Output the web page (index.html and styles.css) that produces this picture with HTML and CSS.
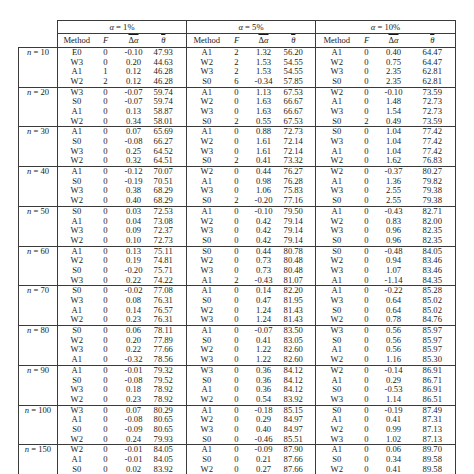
FILE: index.html
```html
<!DOCTYPE html>
<html>
<head>
<meta charset="utf-8">
<link rel="stylesheet" href="styles.css">
</head>
<body>
<table class="results">
<colgroup>
<col class="w-lab">
<col class="w-m1"><col class="w-f1"><col class="w-d1"><col class="w-t1">
<col class="w-m2"><col class="w-f2"><col class="w-d2"><col class="w-t2">
<col class="w-m3"><col class="w-f3"><col class="w-d3"><col class="w-t3">
</colgroup>
<thead>
<tr class="grp-row">
<th class="corner"></th>
<th class="grp" colspan="4"><i>α</i> = 1%</th>
<th class="grp" colspan="4"><i>α</i> = 5%</th>
<th class="grp" colspan="4"><i>α</i> = 10%</th>
</tr>
<tr class="sub-row">
<th class="corner"></th>
<th class="m">Method</th><th><i>F</i></th><th><span class="ov">Δ<i>α</i></span></th><th class="t1"><i class="ov">θ</i></th>
<th class="m">Method</th><th><i>F</i></th><th><span class="ov">Δ<i>α</i></span></th><th class="t2"><i class="ov">θ</i></th>
<th class="m">Method</th><th><i>F</i></th><th><span class="ov">Δ<i>α</i></span></th><th class="t3"><i class="ov">θ</i></th>
</tr>
</thead>
<tbody>
<tr><th class="lab" rowspan="4"><i>n</i> = 10</th><td>E0</td><td>0</td><td>-0.10</td><td>47.93</td><td>A1</td><td>2</td><td>1.32</td><td>56.20</td><td>A1</td><td>0</td><td>0.40</td><td>64.47</td></tr>
<tr><td>W3</td><td>0</td><td>0.20</td><td>44.63</td><td>W2</td><td>2</td><td>1.53</td><td>54.55</td><td>W2</td><td>0</td><td>0.75</td><td>64.47</td></tr>
<tr><td>A1</td><td>1</td><td>0.12</td><td>46.28</td><td>W3</td><td>2</td><td>1.53</td><td>54.55</td><td>W3</td><td>0</td><td>2.35</td><td>62.81</td></tr>
<tr><td>W2</td><td>2</td><td>0.12</td><td>46.28</td><td>S0</td><td>6</td><td>-0.34</td><td>57.85</td><td>S0</td><td>0</td><td>2.35</td><td>62.81</td></tr>
</tbody>
<tbody>
<tr><th class="lab" rowspan="4"><i>n</i> = 20</th><td>W3</td><td>0</td><td>-0.07</td><td>59.74</td><td>A1</td><td>0</td><td>1.13</td><td>67.53</td><td>W2</td><td>0</td><td>-0.10</td><td>73.59</td></tr>
<tr><td>S0</td><td>0</td><td>-0.07</td><td>59.74</td><td>W2</td><td>0</td><td>1.63</td><td>66.67</td><td>A1</td><td>0</td><td>1.48</td><td>72.73</td></tr>
<tr><td>A1</td><td>0</td><td>0.13</td><td>58.87</td><td>W3</td><td>0</td><td>1.63</td><td>66.67</td><td>W3</td><td>0</td><td>1.54</td><td>72.73</td></tr>
<tr><td>W2</td><td>0</td><td>0.34</td><td>58.01</td><td>S0</td><td>2</td><td>0.55</td><td>67.53</td><td>S0</td><td>2</td><td>0.49</td><td>73.59</td></tr>
</tbody>
<tbody>
<tr><th class="lab" rowspan="4"><i>n</i> = 30</th><td>A1</td><td>0</td><td>0.07</td><td>65.69</td><td>A1</td><td>0</td><td>0.88</td><td>72.73</td><td>S0</td><td>0</td><td>1.04</td><td>77.42</td></tr>
<tr><td>S0</td><td>0</td><td>-0.08</td><td>66.27</td><td>W2</td><td>0</td><td>1.61</td><td>72.14</td><td>W3</td><td>0</td><td>1.04</td><td>77.42</td></tr>
<tr><td>W3</td><td>0</td><td>0.25</td><td>64.52</td><td>W3</td><td>0</td><td>1.61</td><td>72.14</td><td>A1</td><td>0</td><td>1.04</td><td>77.42</td></tr>
<tr><td>W2</td><td>0</td><td>0.32</td><td>64.51</td><td>S0</td><td>2</td><td>0.41</td><td>73.32</td><td>W2</td><td>0</td><td>1.62</td><td>76.83</td></tr>
</tbody>
<tbody>
<tr><th class="lab" rowspan="4"><i>n</i> = 40</th><td>A1</td><td>0</td><td>-0.12</td><td>70.07</td><td>W2</td><td>0</td><td>0.44</td><td>76.27</td><td>W2</td><td>0</td><td>-0.37</td><td>80.27</td></tr>
<tr><td>S0</td><td>0</td><td>-0.19</td><td>70.51</td><td>A1</td><td>0</td><td>0.98</td><td>76.28</td><td>A1</td><td>0</td><td>1.36</td><td>79.82</td></tr>
<tr><td>W3</td><td>0</td><td>0.38</td><td>68.29</td><td>W3</td><td>0</td><td>1.06</td><td>75.83</td><td>W3</td><td>0</td><td>2.55</td><td>79.38</td></tr>
<tr><td>W2</td><td>0</td><td>0.40</td><td>68.29</td><td>S0</td><td>2</td><td>-0.20</td><td>77.16</td><td>S0</td><td>0</td><td>2.55</td><td>79.38</td></tr>
</tbody>
<tbody>
<tr><th class="lab" rowspan="4"><i>n</i> = 50</th><td>S0</td><td>0</td><td>0.03</td><td>72.53</td><td>A1</td><td>0</td><td>-0.10</td><td>79.50</td><td>A1</td><td>0</td><td>-0.43</td><td>82.71</td></tr>
<tr><td>A1</td><td>0</td><td>0.04</td><td>73.08</td><td>W2</td><td>0</td><td>0.42</td><td>79.14</td><td>W2</td><td>0</td><td>0.83</td><td>82.00</td></tr>
<tr><td>W3</td><td>0</td><td>0.09</td><td>72.37</td><td>W3</td><td>0</td><td>0.42</td><td>79.14</td><td>W3</td><td>0</td><td>0.96</td><td>82.35</td></tr>
<tr><td>W2</td><td>0</td><td>0.10</td><td>72.73</td><td>S0</td><td>0</td><td>0.42</td><td>79.14</td><td>S0</td><td>0</td><td>0.96</td><td>82.35</td></tr>
</tbody>
<tbody>
<tr><th class="lab" rowspan="4"><i>n</i> = 60</th><td>A1</td><td>0</td><td>0.13</td><td>75.11</td><td>S0</td><td>0</td><td>0.44</td><td>80.78</td><td>S0</td><td>0</td><td>-0.48</td><td>84.05</td></tr>
<tr><td>W2</td><td>0</td><td>0.19</td><td>74.81</td><td>W2</td><td>0</td><td>0.73</td><td>80.48</td><td>W2</td><td>0</td><td>0.94</td><td>83.46</td></tr>
<tr><td>S0</td><td>0</td><td>-0.20</td><td>75.71</td><td>W3</td><td>0</td><td>0.73</td><td>80.48</td><td>W3</td><td>0</td><td>1.07</td><td>83.46</td></tr>
<tr><td>W3</td><td>0</td><td>0.22</td><td>74.22</td><td>A1</td><td>2</td><td>-0.43</td><td>81.07</td><td>A1</td><td>0</td><td>-1.14</td><td>84.35</td></tr>
</tbody>
<tbody>
<tr><th class="lab" rowspan="4"><i>n</i> = 70</th><td>S0</td><td>0</td><td>-0.02</td><td>77.08</td><td>A1</td><td>0</td><td>0.14</td><td>82.20</td><td>A1</td><td>0</td><td>-0.22</td><td>85.28</td></tr>
<tr><td>W3</td><td>0</td><td>0.08</td><td>76.31</td><td>S0</td><td>0</td><td>0.47</td><td>81.95</td><td>W3</td><td>0</td><td>0.64</td><td>85.02</td></tr>
<tr><td>A1</td><td>0</td><td>0.14</td><td>76.57</td><td>W2</td><td>0</td><td>1.24</td><td>81.43</td><td>S0</td><td>0</td><td>0.64</td><td>85.02</td></tr>
<tr><td>W2</td><td>0</td><td>0.23</td><td>76.31</td><td>W3</td><td>0</td><td>1.24</td><td>81.43</td><td>W2</td><td>0</td><td>0.78</td><td>84.76</td></tr>
</tbody>
<tbody>
<tr><th class="lab" rowspan="4"><i>n</i> = 80</th><td>S0</td><td>0</td><td>0.06</td><td>78.11</td><td>A1</td><td>0</td><td>-0.07</td><td>83.50</td><td>W3</td><td>0</td><td>0.56</td><td>85.97</td></tr>
<tr><td>W2</td><td>0</td><td>0.20</td><td>77.89</td><td>S0</td><td>0</td><td>0.41</td><td>83.05</td><td>S0</td><td>0</td><td>0.56</td><td>85.97</td></tr>
<tr><td>W3</td><td>0</td><td>0.22</td><td>77.66</td><td>W2</td><td>0</td><td>1.22</td><td>82.60</td><td>A1</td><td>0</td><td>0.56</td><td>85.97</td></tr>
<tr><td>A1</td><td>0</td><td>-0.32</td><td>78.56</td><td>W3</td><td>0</td><td>1.22</td><td>82.60</td><td>W2</td><td>0</td><td>1.16</td><td>85.30</td></tr>
</tbody>
<tbody>
<tr><th class="lab" rowspan="4"><i>n</i> = 90</th><td>A1</td><td>0</td><td>-0.01</td><td>79.32</td><td>W3</td><td>0</td><td>0.36</td><td>84.12</td><td>W2</td><td>0</td><td>-0.14</td><td>86.91</td></tr>
<tr><td>S0</td><td>0</td><td>-0.08</td><td>79.52</td><td>S0</td><td>0</td><td>0.36</td><td>84.12</td><td>A1</td><td>0</td><td>0.29</td><td>86.71</td></tr>
<tr><td>W3</td><td>0</td><td>0.18</td><td>78.92</td><td>A1</td><td>0</td><td>0.36</td><td>84.12</td><td>S0</td><td>0</td><td>-0.53</td><td>86.91</td></tr>
<tr><td>W2</td><td>0</td><td>0.23</td><td>78.92</td><td>W2</td><td>0</td><td>0.54</td><td>83.92</td><td>W3</td><td>0</td><td>1.14</td><td>86.51</td></tr>
</tbody>
<tbody>
<tr><th class="lab" rowspan="4"><i>n</i> = 100</th><td>W3</td><td>0</td><td>0.07</td><td>80.29</td><td>A1</td><td>0</td><td>-0.18</td><td>85.15</td><td>S0</td><td>0</td><td>-0.19</td><td>87.49</td></tr>
<tr><td>A1</td><td>0</td><td>-0.08</td><td>80.65</td><td>W2</td><td>0</td><td>0.29</td><td>84.97</td><td>A1</td><td>0</td><td>0.41</td><td>87.31</td></tr>
<tr><td>S0</td><td>0</td><td>-0.09</td><td>80.65</td><td>W3</td><td>0</td><td>0.40</td><td>84.97</td><td>W2</td><td>0</td><td>0.99</td><td>87.13</td></tr>
<tr><td>W2</td><td>0</td><td>0.24</td><td>79.93</td><td>S0</td><td>0</td><td>-0.46</td><td>85.51</td><td>W3</td><td>0</td><td>1.02</td><td>87.13</td></tr>
</tbody>
<tbody>
<tr><th class="lab" rowspan="3"><i>n</i> = 150</th><td>W2</td><td>0</td><td>-0.01</td><td>84.05</td><td>A1</td><td>0</td><td>-0.09</td><td>87.90</td><td>A1</td><td>0</td><td>0.06</td><td>89.70</td></tr>
<tr><td>A1</td><td>0</td><td>-0.01</td><td>84.05</td><td>S0</td><td>0</td><td>0.21</td><td>87.66</td><td>S0</td><td>0</td><td>0.34</td><td>89.58</td></tr>
<tr><td>S0</td><td>0</td><td>0.02</td><td>83.92</td><td>W2</td><td>0</td><td>0.27</td><td>87.66</td><td>W2</td><td>0</td><td>0.41</td><td>89.58</td></tr>
</tbody>
</table>
</body>
</html>
```
FILE: styles.css
```css
html, body {
  margin: 0;
  padding: 0;
  background: #ffffff;
  overflow: hidden;
}

body {
  font-family: "Liberation Serif", "Times New Roman", serif;
  font-size: 8.6px;
  color: #1a1a1a;
}

.results {
  border-collapse: collapse;
  table-layout: fixed;
  width: 437px;
  margin: 20px 0 0 18px;
}

.w-lab { width: 39px; }
.w-m1 { width: 38px; } .w-f1 { width: 20px; } .w-d1 { width: 36px; } .w-t1 { width: 35px; }
.w-m2 { width: 40px; } .w-f2 { width: 20px; } .w-d2 { width: 34px; } .w-t2 { width: 35px; }
.w-m3 { width: 42px; } .w-f3 { width: 18px; } .w-d3 { width: 36px; } .w-t3 { width: 44px; }

.results th,
.results td {
  padding: 0;
  font-weight: normal;
  text-align: center;
  white-space: nowrap;
  height: 9.68px;
  line-height: 9.68px;
}

.results thead th {
  height: 12.4px;
  line-height: 12.4px;
}

.grp {
  border: 1px solid #3a3a3a;
}

.sub-row .m {
  border-left: 1px solid #3a3a3a;
}

.sub-row th:last-child {
  border-right: 1px solid #3a3a3a;
}

.ov {
  text-decoration: overline;
}

.results tbody {
  border-top: 1px solid #3a3a3a;
}

.lab {
  vertical-align: top;
  border-left: 1px solid #3a3a3a;
  border-right: 1px solid #3a3a3a;
}

.results td:nth-of-type(1),
.results td:nth-of-type(5),
.results td:nth-of-type(9) {
  border-left: 1px solid #3a3a3a;
}

.results td:nth-of-type(12) {
  border-right: 1px solid #3a3a3a;
}

.results td:nth-of-type(4),
.sub-row .t1 { padding-right: 11px; }
.results td:nth-of-type(8),
.sub-row .t2 { padding-right: 9px; }
.results td:nth-of-type(12),
.sub-row .t3 { padding-right: 2px; }
```
